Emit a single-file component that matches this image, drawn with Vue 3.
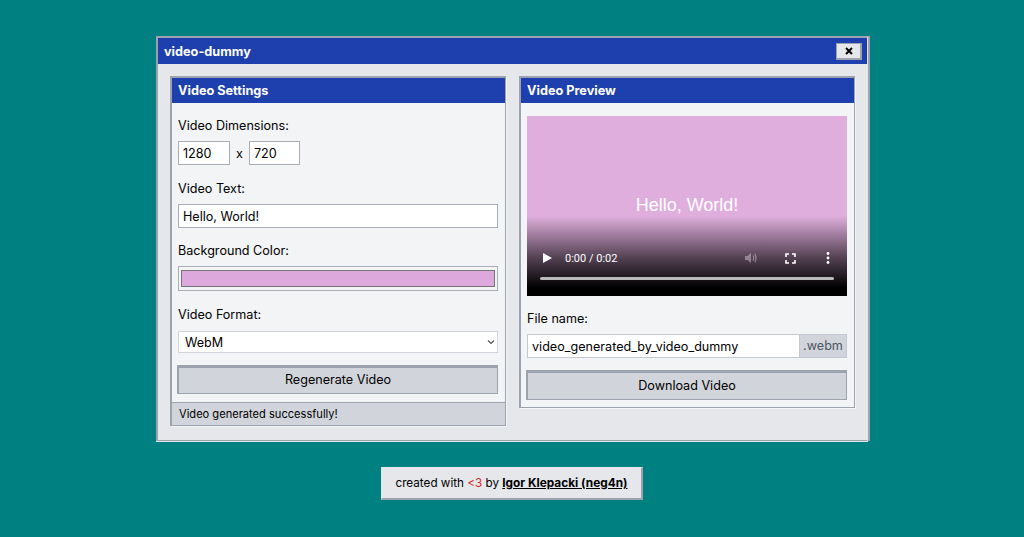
<template>
  <div class="page">
    <div class="window">
      <div class="titlebar">
        <span class="title">video-dummy</span>
        <button class="close">
          <svg width="8" height="8" viewBox="0 0 8 8">
            <path d="M1 1L7 7M7 1L1 7" stroke="#000" stroke-width="2" fill="none" />
          </svg>
        </button>
      </div>
      <div class="content">
        <section class="panel">
          <h2 class="panel-head">Video Settings</h2>
          <div class="panel-body">
            <label class="label">Video Dimensions:</label>
            <div class="dims">
              <input class="field dim" :value="width" />
              <span>x</span>
              <input class="field dim dim-h" :value="height" />
            </div>
            <label class="label">Video Text:</label>
            <input class="field wide" :value="text" />
            <label class="label">Background Color:</label>
            <div class="color"><div class="swatch"></div></div>
            <label class="label">Video Format:</label>
            <div class="select">
              <span>WebM</span>
              <svg width="8" height="6" viewBox="0 0 8 6">
                <path d="M1 1.5L4 4.5L7 1.5" stroke="#555" stroke-width="1.2" fill="none" />
              </svg>
            </div>
            <button class="btn">Regenerate Video</button>
          </div>
          <div class="status">Video generated successfully!</div>
        </section>
        <section class="panel">
          <h2 class="panel-head">Video Preview</h2>
          <div class="panel-body preview">
            <div class="video">
              <div class="video-text">{{ text }}</div>
              <div class="controls">
                <div class="ctl-row">
                  <svg class="play" width="9" height="10" viewBox="0 0 9 10"><path d="M0 0L9 5L0 10Z" fill="#fff" /></svg>
                  <span class="time">0:00 / 0:02</span>
                  <svg class="mute" width="14" height="14" viewBox="0 0 14 14">
                    <path d="M1 5H3.5L7 2V12L3.5 9H1Z" fill="#c9bccb" opacity=".55" />
                    <path d="M9 4.5Q10.5 7 9 9.5M10.8 2.8Q13.2 7 10.8 11.2" stroke="#c9bccb" opacity=".55" stroke-width="1.3" fill="none" />
                  </svg>
                  <svg class="full" width="11" height="11" viewBox="0 0 11 11">
                    <path d="M1 4V1H4M7 1H10V4M10 7V10H7M4 10H1V7" stroke="#fff" stroke-width="1.6" fill="none" />
                  </svg>
                  <svg class="more" width="4" height="12" viewBox="0 0 4 12">
                    <circle cx="2" cy="1.5" r="1.4" fill="#fff" />
                    <circle cx="2" cy="6" r="1.4" fill="#fff" />
                    <circle cx="2" cy="10.5" r="1.4" fill="#fff" />
                  </svg>
                </div>
                <div class="track"></div>
              </div>
            </div>
            <label class="label">File name:</label>
            <div class="filename">
              <input class="field name" :value="fileName" />
              <span class="ext">.webm</span>
            </div>
            <button class="btn download">Download Video</button>
          </div>
        </section>
      </div>
    </div>
    <div class="footer">
      created with <span class="heart">&lt;3</span> by <a class="author" href="#">Igor Klepacki (neg4n)</a>
    </div>
  </div>
</template>

<script setup>
const width = 1280;
const height = 720;
const text = "Hello, World!";
const fileName = "video_generated_by_video_dummy";
</script>

<style>
html,
body {
  margin: 0;
  background: #008080;
}
</style>

<style scoped>
.page {
  height: 537px;
  overflow: hidden;
  box-sizing: border-box;
  padding-top: 36px;
  display: flex;
  flex-direction: column;
  align-items: center;
  font-family: Inter, "Noto Sans", sans-serif;
  font-size: 12.6px;
  color: #000;
}

.window {
  width: 712px;
  box-sizing: border-box;
  background: #e5e7eb;
  border: 2px solid #9ca3af;
  border-right: 1px solid #e5e7eb;
  border-bottom: 1px solid #9ca3af;
  box-shadow: 2px 0 0 #9ca3af, 0 1px 0 #e5e7eb;
}

.titlebar {
  height: 26px;
  background: #1e40af;
  color: #fff;
  display: flex;
  align-items: center;
  justify-content: space-between;
  padding: 0 5px 0 6px;
}

.title {
  font-weight: 700;
  font-size: 12.7px;
}

.close {
  width: 26px;
  height: 17px;
  padding: 0;
  background: #e5e7eb;
  border: 1px solid #9ca3af;
  border-width: 1px 2px 2px 1px;
  display: flex;
  align-items: center;
  justify-content: center;
}

.content {
  display: flex;
  align-items: flex-start;
  gap: 13px;
  padding: 12px 11px 14px 12px;
}

.panel {
  width: 336px;
  box-sizing: border-box;
  background: #f3f4f6;
  border: 2px solid #9ca3af;
  border-width: 2px 1px 1px 2px;
  box-shadow: 1px 1px 0 #f3f4f6;
}

.panel-head {
  margin: 0;
  height: 25px;
  line-height: 25px;
  padding: 0 6px;
  background: #1e40af;
  color: #fff;
  font-size: 12.7px;
  font-weight: 700;
}

.panel-body {
  padding: 15px 6px 8px;
  display: flex;
  flex-direction: column;
}

.label {
  display: block;
  line-height: 16px;
  margin-bottom: 7px;
}

.field {
  box-sizing: border-box;
  height: 24px;
  padding: 0 4px;
  border: 1px solid #a8adb6;
  background: #fff;
  font: inherit;
  color: #000;
  outline: none;
}

.dims {
  display: flex;
  align-items: center;
  gap: 6px;
  margin-bottom: 16px;
}

.dim {
  width: 52px;
}

.dim-h {
  width: 51px;
}

.wide {
  width: 320px;
  margin-bottom: 15px;
}

.color {
  box-sizing: border-box;
  width: 320px;
  height: 25px;
  border: 1px solid #a8adb6;
  padding: 3px 2px;
  background: #f3f4f6;
  margin-bottom: 16px;
}

.swatch {
  height: 100%;
  background: #dda9dc;
  border: 1px solid #767676;
  box-sizing: border-box;
}

.select {
  box-sizing: border-box;
  width: 320px;
  height: 22px;
  margin-top: 1px;
  border: 1px solid #d1d5db;
  background: #fff;
  padding: 0 2px 0 6px;
  display: flex;
  align-items: center;
  justify-content: space-between;
  margin-bottom: 12px;
}

.btn {
  box-sizing: border-box;
  width: 321px;
  height: 29px;
  margin-left: -1px;
  padding: 0 0 2px;
  background: #d1d5db;
  border: 2px solid #9ca3af;
  border-width: 3px 1px 1px 2px;
  font: inherit;
  color: #000;
}

.status {
  height: 22px;
  line-height: 22px;
  padding: 0 7px;
  background: #d1d5db;
  border-top: 1px solid #9ca3af;
  font-size: 11.1px;
}

.preview {
  padding-top: 13px;
  padding-bottom: 7px;
}

.video {
  position: relative;
  width: 320px;
  height: 180px;
  background: #dfaedd;
  margin-bottom: 15px;
}

.video-text {
  padding-top: 78px;
  text-align: center;
  color: #fff;
  font-family: "Liberation Sans", Arial, sans-serif;
  font-size: 18px;
  line-height: 22px;
}

.controls {
  position: absolute;
  left: 0;
  right: 0;
  bottom: 0;
  height: 80px;
  background: linear-gradient(to bottom, rgba(0, 0, 0, 0), rgba(0, 0, 0, 0.6) 50%, #000 90%);
}

.ctl-row {
  position: absolute;
  left: 16px;
  right: 17px;
  top: 35px;
  height: 14px;
  display: flex;
  align-items: center;
}

.time {
  margin-left: 13px;
  color: #fff;
  font-family: Roboto, "Liberation Sans", sans-serif;
  font-size: 11px;
}

.mute {
  margin-left: auto;
}

.full {
  margin-left: 27px;
}

.more {
  margin-left: 30px;
}

.track {
  position: absolute;
  left: 13px;
  right: 13px;
  top: 61px;
  height: 3px;
  border-radius: 2px;
  background: #b9b9b9;
}

.filename {
  display: flex;
  width: 320px;
  height: 24px;
  margin-bottom: 12px;
}

.name {
  flex: 1;
  min-width: 0;
  border-right: none;
  border-color: #c4c8cf;
}

.ext {
  box-sizing: border-box;
  width: 48px;
  line-height: 22px;
  text-align: center;
  background: #d1d5db;
  border: 1px solid #c4c8cf;
  color: #4b5563;
}

.download {
  height: 30px;
}

.footer {
  margin-top: 26px;
  box-sizing: border-box;
  width: 262px;
  height: 33px;
  line-height: 30px;
  text-align: center;
  background: #e5e7eb;
  border: 1px solid #e5e7eb;
  border-right: 2px solid #9ca3af;
  border-bottom: 2px solid #9ca3af;
  font-size: 11.7px;
}

.heart {
  color: #dc2626;
}

.author {
  color: #000;
  font-weight: 700;
  font-size: 11.85px;
  text-decoration: underline;
}
</style>
